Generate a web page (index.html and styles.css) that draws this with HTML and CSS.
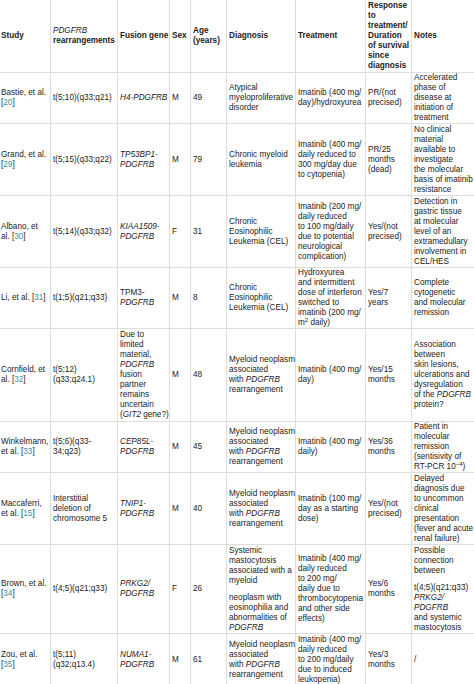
FILE: index.html
```html
<!DOCTYPE html>
<html lang="en">
<head>
<meta charset="utf-8">
<title>PDGFRB rearrangements</title>
<link rel="stylesheet" href="styles.css">
</head>
<body>
<table class="grid">
  <colgroup>
    <col class="c-study">
    <col class="c-rearr">
    <col class="c-fusion">
    <col class="c-sex">
    <col class="c-age">
    <col class="c-diag">
    <col class="c-treat">
    <col class="c-resp">
    <col class="c-notes">
  </colgroup>
  <thead>
    <tr class="h-head">
      <th>Study</th>
      <th><span class="gene-h">PDGFRB</span><br>rearrangements</th>
      <th>Fusion gene</th>
      <th>Sex</th>
      <th>Age<br>(years)</th>
      <th>Diagnosis</th>
      <th>Treatment</th>
      <th>Response<br>to<br>treatment/<br>Duration<br>of survival<br>since<br>diagnosis</th>
      <th>Notes</th>
    </tr>
  </thead>
  <tbody>
    <tr class="h-51">
      <td>Bastie, et al.<br>[<a class="ref">20</a>]</td>
      <td>t(5;10)(q33;q21)</td>
      <td><i>H4-PDGFRB</i></td>
      <td>M</td>
      <td>49</td>
      <td>Atypical<br>myeloproliferative<br>disorder</td>
      <td>Imatinib (400 mg/<br>day)/hydroxyurea</td>
      <td>PR/(not<br>precised)</td>
      <td>Accelerated<br>phase of<br>disease at<br>initiation of<br>treatment</td>
    </tr>
    <tr class="h-72">
      <td>Grand, et al.<br>[<a class="ref">29</a>]</td>
      <td>t(5;15)(q33;q22)</td>
      <td><i>TP53BP1-<br>PDGFRB</i></td>
      <td>M</td>
      <td>79</td>
      <td>Chronic myeloid<br>leukemia</td>
      <td>Imatinib (400 mg/<br>daily reduced to<br>300 mg/day due<br>to cytopenia)</td>
      <td>PR/25<br>months<br>(dead)</td>
      <td>No clinical<br>material<br>available to<br>investigate<br>the molecular<br>basis of imatinib<br>resistance</td>
    </tr>
    <tr class="h-72">
      <td>Albano, et<br>al. [<a class="ref">30</a>]</td>
      <td>t(5;14)(q33;q32)</td>
      <td><i>KIAA1509-<br>PDGFRB</i></td>
      <td>F</td>
      <td>31</td>
      <td>Chronic<br>Eosinophilic<br>Leukemia (CEL)</td>
      <td>Imatinib (200 mg/<br>daily reduced<br>to 100 mg/daily<br>due to potential<br>neurological<br>complication)</td>
      <td>Yes/(not<br>precised)</td>
      <td>Detection in<br>gastric tissue<br>at molecular<br>level of an<br>extramedullary<br>involvement in<br>CEL/HES</td>
    </tr>
    <tr class="h-61">
      <td>Li, et al. [<a class="ref">31</a>]</td>
      <td>t(1;5)(q21;q33)</td>
      <td>TPM3-<br><i>PDGFRB</i></td>
      <td>M</td>
      <td>8</td>
      <td>Chronic<br>Eosinophilic<br>Leukemia (CEL)</td>
      <td>Hydroxyurea<br>and intermittent<br>dose of interferon<br>switched to<br>imatinib (200 mg/<br>m<sup>2</sup> daily)</td>
      <td>Yes/7<br>years</td>
      <td>Complete<br>cytogenetic<br>and molecular<br>remission</td>
    </tr>
    <tr class="h-93">
      <td>Cornfield, et<br>al. [<a class="ref">32</a>]</td>
      <td>t(5;12)<br>(q33;q24.1)</td>
      <td>Due to<br>limited<br>material,<br><i>PDGFRB</i><br>fusion<br>partner<br>remains<br>uncertain<br>(<i>GIT2</i> gene?)</td>
      <td>M</td>
      <td>48</td>
      <td>Myeloid neoplasm<br>associated<br>with <i>PDGFRB</i><br>rearrangement</td>
      <td>Imatinib (400 mg/<br>day)</td>
      <td>Yes/15<br>months</td>
      <td>Association<br>between<br>skin lesions,<br>ulcerations and<br>dysregulation<br>of the <i>PDGFRB</i><br>protein?</td>
    </tr>
    <tr class="h-51">
      <td>Winkelmann,<br>et al. [<a class="ref">33</a>]</td>
      <td>t(5;6)(q33-<br>34;q23)</td>
      <td><i>CEP85L-<br>PDGFRB</i></td>
      <td>M</td>
      <td>45</td>
      <td>Myeloid neoplasm<br>associated<br>with <i>PDGFRB</i><br>rearrangement</td>
      <td>Imatinib (400 mg/<br>daily)</td>
      <td>Yes/36<br>months</td>
      <td>Patient in<br>molecular<br>remission<br>(sentisivity of<br>RT-PCR 10<sup>−4</sup>)</td>
    </tr>
    <tr class="h-72">
      <td>Maccaferri,<br>et al. [<a class="ref">15</a>]</td>
      <td>Interstitial<br>deletion of<br>chromosome 5</td>
      <td><i>TNIP1-<br>PDGFRB</i></td>
      <td>M</td>
      <td>40</td>
      <td>Myeloid neoplasm<br>associated<br>with <i>PDGFRB</i><br>rearrangement</td>
      <td>Imatinib (100 mg/<br>day as a starting<br>dose)</td>
      <td>Yes/(not<br>precised)</td>
      <td>Delayed<br>diagnosis due<br>to uncommon<br>clinical<br>presentation<br>(fever and acute<br>renal failure)</td>
    </tr>
    <tr class="h-89">
      <td>Brown, et al.<br>[<a class="ref">34</a>]</td>
      <td>t(4;5)(q21;q33)</td>
      <td><i>PRKG2/<br>PDGFRB</i></td>
      <td>F</td>
      <td>26</td>
      <td><p class="para">Systemic<br>mastocytosis<br>associated with a<br>myeloid</p><p class="para">neoplasm with<br>eosinophilia and<br>abnormalities of<br><i>PDGFRB</i></p></td>
      <td>Imatinib (400 mg/<br>daily reduced<br>to 200 mg/<br>daily due to<br>thrombocytopenia<br>and other side<br>effects)</td>
      <td>Yes/6<br>months</td>
      <td><p class="para">Possible<br>connection<br>between</p><p class="para">t(4;5)(q21;q33)<br><i>PRKG2/<br>PDGFRB</i><br>and systemic<br>mastocytosis</p></td>
    </tr>
    <tr class="h-52">
      <td>Zou, et al.<br>[<a class="ref">35</a>]</td>
      <td>t(5;11)<br>(q32;q13.4)</td>
      <td><i>NUMA1-<br>PDGFRB</i></td>
      <td>M</td>
      <td>61</td>
      <td>Myeloid neoplasm<br>associated<br>with <i>PDGFRB</i><br>rearrangement</td>
      <td>Imatinib (400 mg/<br>daily reduced<br>to 200 mg/daily<br>due to induced<br>leukopenia)</td>
      <td>Yes/3<br>months</td>
      <td>/</td>
    </tr>
  </tbody>
</table>
</body>
</html>
```

FILE: styles.css
```css
html, body {
  margin: 0;
  padding: 0;
  background: #ffffff;
  overflow: hidden;
}

.grid {
  table-layout: fixed;
  border-collapse: separate;
  border-spacing: 0;
  width: 481px;
  font-family: "Liberation Sans", Arial, sans-serif;
  font-size: 8.2px;
  line-height: 10px;
  color: #222222;
}

.c-study { width: 51px; }
.c-rearr { width: 67px; }
.c-fusion { width: 52px; }
.c-sex { width: 21px; }
.c-age { width: 36px; }
.c-diag { width: 69px; }
.c-treat { width: 70px; }
.c-resp { width: 46px; }
.c-notes { width: 69px; }

.grid th,
.grid td {
  box-sizing: border-box;
  padding: 0 1px 0 2px;
  border-right: 1px solid #dedede;
  border-bottom: 1px solid #dedede;
  vertical-align: middle;
  text-align: left;
  white-space: nowrap;
  overflow: visible;
}

.grid th:first-child,
.grid td:first-child {
  padding-left: 1px;
}

.grid th {
  font-weight: bold;
}

.gene-h {
  font-style: italic;
  font-weight: normal;
}

.grid i {
  font-style: italic;
}

.grid sup {
  font-size: 6px;
  line-height: 0;
  vertical-align: 3px;
}

.ref {
  color: #3a8e9e;
  text-decoration: none;
}

.para {
  margin: 0;
}

.para + .para {
  margin-top: 7px;
}

.h-head { height: 73px; }
.h-51 { height: 51px; }
.h-52 { height: 52px; }
.h-61 { height: 61px; }
.h-72 { height: 72px; }
.h-89 { height: 89px; }
.h-93 { height: 93px; }
```
